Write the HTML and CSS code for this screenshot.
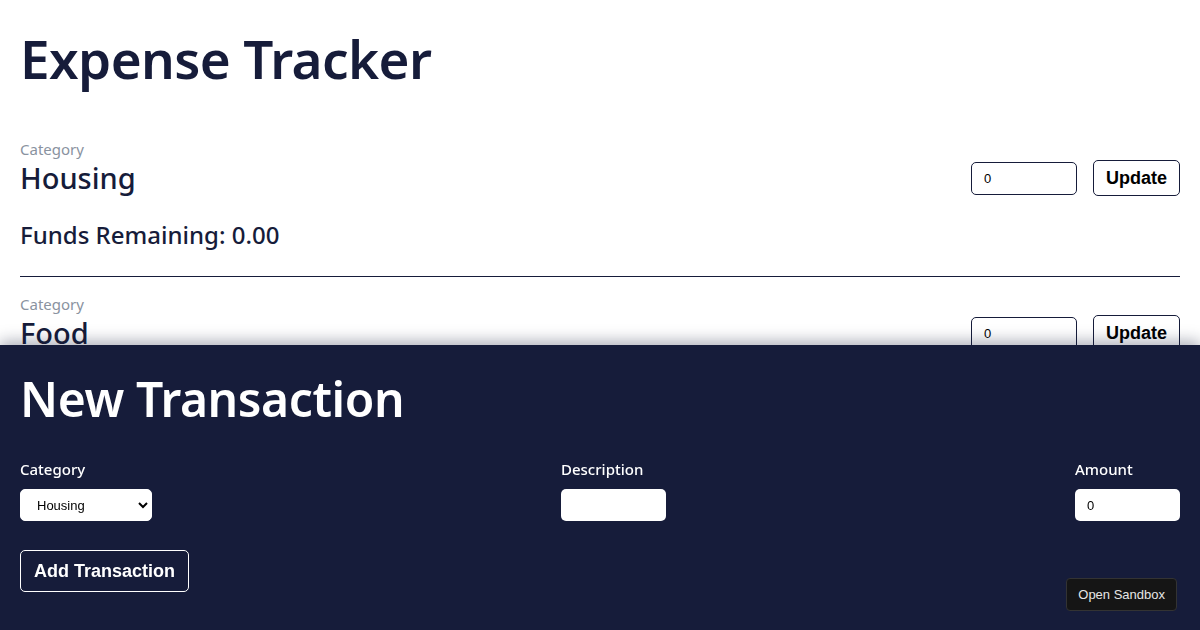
FILE: index.html
```html
<!DOCTYPE html>
<html lang="en">
<head>
<meta charset="utf-8">
<title>Expense Tracker</title>
<link rel="stylesheet" href="styles.css">
</head>
<body>
<main class="page">
  <h1 class="title">Expense Tracker</h1>
  <section class="category">
    <div class="cat-row">
      <div class="cat-info">
        <div class="cat-label">Category</div>
        <h2 class="cat-name">Housing</h2>
      </div>
      <div class="cat-controls">
        <input class="budget-input" type="text" value="0">
        <button class="btn-outline">Update</button>
      </div>
    </div>
    <h3 class="funds">Funds Remaining: 0.00</h3>
  </section>
  <section class="category">
    <div class="cat-row">
      <div class="cat-info">
        <div class="cat-label">Category</div>
        <h2 class="cat-name">Food</h2>
      </div>
      <div class="cat-controls">
        <input class="budget-input" type="text" value="0">
        <button class="btn-outline">Update</button>
      </div>
    </div>
  </section>
</main>
<footer class="panel">
  <h2 class="panel-title">New Transaction</h2>
  <div class="fields">
    <label class="field">
      <span class="field-label">Category</span>
      <select class="field-select">
        <option>Housing</option>
        <option>Food</option>
      </select>
    </label>
    <label class="field">
      <span class="field-label">Description</span>
      <input class="field-input" type="text" value="">
    </label>
    <label class="field">
      <span class="field-label">Amount</span>
      <input class="field-input" type="text" value="0">
    </label>
  </div>
  <button class="btn-add">Add Transaction</button>
</footer>
<button class="sandbox-btn">Open Sandbox</button>
</body>
</html>
```
FILE: styles.css
```css
* { box-sizing: border-box; }
html, body { margin: 0; padding: 0; background: #ffffff; }
body {
  font-family: "Noto Sans", "Open Sans", sans-serif;
  color: #161c3a;
  overflow: hidden;
  height: 630px;
}
.page {
  padding: 19px 20px 0;
  height: 345px;
  overflow: hidden;
}
.title {
  font-size: 53px;
  font-weight: 600;
  margin: 0;
  line-height: 80px;
  letter-spacing: -0.6px;
}
.category {
  margin-top: 41px;
  border-bottom: 1px solid #161c3a;
  padding-bottom: 26px;
}
.category + .category { margin-top: 18px; border-bottom: none; }
.cat-row {
  display: flex;
  justify-content: space-between;
  align-items: flex-end;
}
.cat-label {
  font-size: 15px;
  color: #8a939f;
  line-height: 18px;
}
.cat-name {
  font-size: 29px;
  font-weight: 500;
  margin: 0;
  line-height: 40px;
}
.cat-controls {
  display: flex;
  gap: 16px;
  align-items: center;
  padding-bottom: 2px;
}
.budget-input {
  width: 106px;
  height: 33px;
  border: 1px solid #161c3a;
  border-radius: 5px;
  padding: 0 12px;
  font-family: "Liberation Sans", Arial, sans-serif;
  font-size: 13px;
  color: #000;
}
.btn-outline {
  height: 36px;
  padding: 0 12px;
  background: #fff;
  border: 1px solid #161c3a;
  border-radius: 5px;
  font-family: "Liberation Sans", Arial, sans-serif;
  font-weight: 700;
  font-size: 18px;
  color: #000;
}
.funds {
  font-size: 24px;
  font-weight: 500;
  margin: 22px 0 0;
  line-height: 30px;
}
.panel {
  position: fixed;
  left: 0;
  right: 0;
  bottom: 0;
  height: 285px;
  background: #161c3a;
  color: #fff;
  padding: 21px 20px 0;
  box-shadow: 0 -4px 14px rgba(22, 28, 58, 0.35);
}
.panel-title {
  font-size: 48px;
  font-weight: 600;
  margin: 0;
  line-height: 66px;
  letter-spacing: -0.4px;
}
.fields {
  display: flex;
  justify-content: space-between;
  margin-top: 27px;
}
.field { display: flex; flex-direction: column; }
.field-label {
  font-size: 15px;
  font-weight: 500;
  line-height: 20px;
  margin-bottom: 10px;
}
.field-select {
  width: 132px;
  height: 32px;
  border: 1px solid #fff;
  border-radius: 5px;
  background: #fff;
  padding: 0 12px;
  font-family: "Liberation Sans", Arial, sans-serif;
  font-size: 13px;
  color: #000;
}
.field-input {
  width: 105px;
  height: 32px;
  border: none;
  border-radius: 5px;
  background: #fff;
  padding: 0 12px;
  font-family: "Liberation Sans", Arial, sans-serif;
  font-size: 13px;
  color: #000;
}
.btn-add {
  margin-top: 29px;
  height: 42px;
  padding: 0 13px;
  background: transparent;
  border: 1px solid #fff;
  border-radius: 5px;
  font-family: "Liberation Sans", Arial, sans-serif;
  font-weight: 700;
  font-size: 18px;
  color: #fff;
}
.sandbox-btn {
  position: fixed;
  right: 23px;
  bottom: 19px;
  height: 33px;
  padding: 0 11px;
  background: #151515;
  border: 1px solid #333;
  border-radius: 4px;
  font-family: "Liberation Sans", Arial, sans-serif;
  font-size: 13px;
  color: #e6e6e6;
}
```
